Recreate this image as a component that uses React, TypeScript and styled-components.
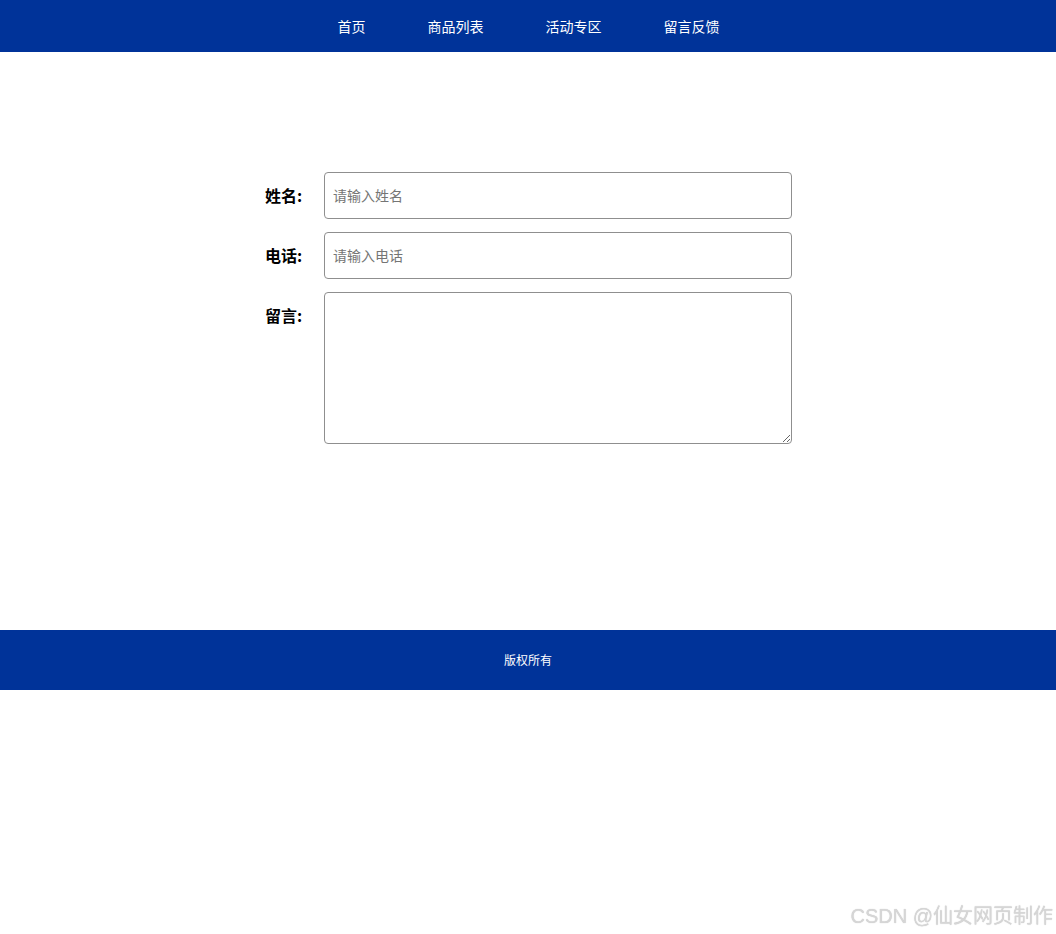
import React from "react";
import styled, { createGlobalStyle } from "styled-components";

const GlobalStyle = createGlobalStyle`
  * { box-sizing: border-box; }
  body {
    margin: 0;
    font-family: "Noto Sans CJK SC", "Liberation Sans", sans-serif;
    background: #ffffff;
    color: #000;
  }
`;

const Header = styled.header`
  height: 52px;
  background: #003399;
  display: flex;
  justify-content: center;
  align-items: center;
`;

const Nav = styled.nav`
  display: flex;
  gap: 62px;
  padding-left: 1px;
`;

const NavLink = styled.a`
  color: #ffffff;
  font-size: 14px;
  text-decoration: none;
  line-height: 20px;
`;

const Main = styled.main`
  height: 578px;
  padding-top: 120px;
  display: flex;
  justify-content: center;
`;

const Form = styled.form`
  width: 528px;
  display: flex;
  flex-direction: column;
  gap: 13px;
`;

const Row = styled.div`
  display: flex;
  align-items: flex-start;
`;

const Label = styled.label`
  width: 60px;
  flex: none;
  font-size: 16px;
  font-weight: bold;
  line-height: 46px;
  padding-left: 1px;
`;

const fieldBase = `
  width: 468px;
  border: 1px solid #8f8f8f;
  border-radius: 4px;
  padding: 0 8px;
  font-size: 14px;
  font-family: "Noto Sans CJK SC", "Liberation Sans", sans-serif;
  color: #000;
  outline: none;
  &::placeholder { color: #757575; }
`;

const Input = styled.input`
  ${fieldBase}
  height: 47px;
  padding-bottom: 1px;
`;

const TextArea = styled.textarea`
  ${fieldBase}
  height: 152px;
  padding: 8px;
  resize: both;
`;

const Footer = styled.footer`
  height: 60px;
  background: #003399;
  display: flex;
  justify-content: center;
  align-items: center;
  color: #ffffff;
  font-size: 12px;
  padding-bottom: 1px;
`;

const Watermark = styled.div`
  position: fixed;
  right: 3px;
  bottom: 5px;
  font-size: 20px;
  color: #d6d6d6;
  text-shadow: 0 0 1px #c4c4c4;
  font-family: "Liberation Sans", "Noto Sans CJK SC", sans-serif;
  pointer-events: none;
`;

export default function App() {
  return (
    <>
      <GlobalStyle />
      <Header>
        <Nav>
          <NavLink href="#">首页</NavLink>
          <NavLink href="#">商品列表</NavLink>
          <NavLink href="#">活动专区</NavLink>
          <NavLink href="#">留言反馈</NavLink>
        </Nav>
      </Header>
      <Main>
        <Form onSubmit={(e) => e.preventDefault()}>
          <Row>
            <Label>姓名:</Label>
            <Input placeholder="请输入姓名" />
          </Row>
          <Row>
            <Label>电话:</Label>
            <Input placeholder="请输入电话" />
          </Row>
          <Row>
            <Label>留言:</Label>
            <TextArea />
          </Row>
        </Form>
      </Main>
      <Footer>版权所有</Footer>
      <Watermark>CSDN @仙女网页制作</Watermark>
    </>
  );
}
